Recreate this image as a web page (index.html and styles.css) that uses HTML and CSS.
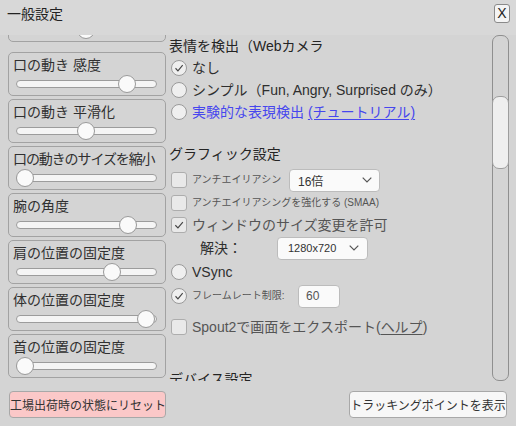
FILE: index.html
```html
<!DOCTYPE html>
<html lang="ja">
<head>
<meta charset="utf-8">
<title>一般設定</title>
<link rel="stylesheet" href="styles.css">
</head>
<body>
<div class="window">
  <header class="titlebar">
    <span class="title">一般設定</span>
    <button class="close">X</button>
  </header>

  <div class="main">
    <div class="left">
      <div class="groups">
        <div class="group group-first">
          <div class="slider"><div class="track"><span class="knob" style="left:calc((100% - 18px) * 0.5)"></span></div></div>
        </div>
        <div class="group">
          <div class="label">口の動き 感度</div>
          <div class="slider"><div class="track"><span class="knob" style="left:calc((100% - 18px) * 0.845)"></span></div></div>
        </div>
        <div class="group">
          <div class="label">口の動き 平滑化</div>
          <div class="slider"><div class="track"><span class="knob" style="left:calc((100% - 18px) * 0.5)"></span></div></div>
        </div>
        <div class="group">
          <div class="label label-tight">口の動きのサイズを縮小</div>
          <div class="slider"><div class="track"><span class="knob" style="left:0"></span></div></div>
        </div>
        <div class="group">
          <div class="label">腕の角度</div>
          <div class="slider"><div class="track"><span class="knob" style="left:calc((100% - 18px) * 0.85)"></span></div></div>
        </div>
        <div class="group">
          <div class="label">肩の位置の固定度</div>
          <div class="slider"><div class="track"><span class="knob" style="left:calc((100% - 18px) * 0.715)"></span></div></div>
        </div>
        <div class="group">
          <div class="label">体の位置の固定度</div>
          <div class="slider"><div class="track"><span class="knob" style="left:calc(100% - 18px)"></span></div></div>
        </div>
        <div class="group">
          <div class="label">首の位置の固定度</div>
          <div class="slider"><div class="track"><span class="knob" style="left:0"></span></div></div>
        </div>
      </div>
    </div>

    <div class="right">
      <div class="heading h-first">表情を検出（Webカメラ</div>
      <div class="row r-opt">
        <span class="radio"><svg viewBox="0 0 16 16"><polyline points="4,8.3 6.8,11.2 12.2,4.8"/></svg></span>
        <span class="txt">なし</span>
      </div>
      <div class="row r-opt">
        <span class="radio"></span>
        <span class="txt">シンプル（Fun, Angry, Surprised のみ）</span>
      </div>
      <div class="row r-opt">
        <span class="radio"></span>
        <span class="txt link">実験的な表現検出 <u>(チュートリアル)</u></span>
      </div>

      <div class="heading h-graphics">グラフィック設定</div>
      <div class="row r-aa">
        <span class="check"></span>
        <span class="small aa-label">アンチエイリアシン</span>
        <span class="select sel-aa"><span class="sel-text">16倍</span><svg class="chev" viewBox="0 0 10 6"><polyline points="0.7,0.7 5,5 9.3,0.7"/></svg></span>
      </div>
      <div class="row r-smaa">
        <span class="check"></span>
        <span class="small">アンチエイリアシングを強化する (SMAA)</span>
      </div>
      <div class="row r-resize">
        <span class="check"><svg viewBox="0 0 16 16"><polyline points="3.8,8.3 6.8,11.4 12.4,4.6"/></svg></span>
        <span class="txt gray">ウィンドウのサイズ変更を許可</span>
      </div>
      <div class="row r-res">
        <span class="txt res-label">解決：</span>
        <span class="select sel-res"><span class="sel-text">1280x720</span><svg class="chev" viewBox="0 0 10 6"><polyline points="0.7,0.7 5,5 9.3,0.7"/></svg></span>
      </div>
      <div class="row r-vsync">
        <span class="radio"></span>
        <span class="txt">VSync</span>
      </div>
      <div class="row r-fps">
        <span class="radio"><svg viewBox="0 0 16 16"><polyline points="4,8.3 6.8,11.2 12.2,4.8"/></svg></span>
        <span class="small fps-label">フレームレート制限:</span>
        <span class="input">60</span>
      </div>
      <div class="row r-spout">
        <span class="check"></span>
        <span class="txt gray">Spout2で画面をエクスポート(<u>ヘルプ</u>)</span>
      </div>
      <div class="heading h-device">デバイス設定</div>
    </div>

    <div class="scrollbar"><div class="thumb"></div></div>
  </div>

  <footer class="footer">
    <button class="btn btn-reset">工場出荷時の状態にリセット</button>
    <button class="btn btn-track">トラッキングポイントを表示</button>
  </footer>
</div>
</body>
</html>
```

FILE: styles.css
```css
* { box-sizing: border-box; }

html, body {
  margin: 0;
  padding: 0;
}

body {
  width: 516px;
  height: 426px;
  overflow: hidden;
  background: #d4d4d4;
  font-family: "Liberation Sans", "Noto Sans CJK JP", sans-serif;
  color: #2b2b2b;
}

.window {
  width: 516px;
  height: 426px;
  display: flex;
  flex-direction: column;
}

/* title bar */
.titlebar {
  height: 35px;
  flex: none;
  display: flex;
  justify-content: space-between;
  align-items: flex-start;
  background: #d8d8d8;
}

.title {
  font-size: 14px;
  line-height: 20px;
  margin: 4px 0 0 7px;
  color: #222;
}

.close {
  width: 16px;
  height: 19px;
  margin: 4px 6px 0 0;
  padding: 0;
  border: 1px solid #8a8a8a;
  border-radius: 3px;
  background: #f4f4f4;
  font-family: "Liberation Sans", sans-serif;
  font-size: 14px;
  line-height: 17px;
  color: #222;
}

/* main */
.main {
  height: 346px;
  flex: none;
  display: flex;
}

.left {
  width: 166px;
  flex: none;
  padding-left: 8px;
  overflow: hidden;
}

.groups {
  margin-top: -37px;
  display: flex;
  flex-direction: column;
  gap: 3px;
}

.group {
  height: 44px;
  border: 1px solid #a2a2a2;
  border-radius: 5px;
  padding: 3px 8px 2px 4px;
}

.group-first {
  margin-bottom: 7px;
  padding-top: 22px;
}

.label {
  font-size: 14px;
  line-height: 19px;
  height: 19px;
  color: #303030;
  white-space: nowrap;
}

.label-tight {
  letter-spacing: -1.1px;
}

.slider {
  height: 18px;
  margin-left: 3px;
  display: flex;
  align-items: center;
}

.track {
  position: relative;
  width: 100%;
  height: 8px;
  border: 1px solid #9c9c9c;
  border-radius: 4px;
  background: #f5f5f5;
}

.knob {
  position: absolute;
  top: -6px;
  width: 18px;
  height: 18px;
  margin-left: -1px;
  border: 1px solid #9a9a9a;
  border-radius: 50%;
  background: #fafafa;
}

/* right */
.right {
  flex: 1;
  min-width: 0;
  padding: 1px 0 0 3px;
  overflow: hidden;
}

.heading {
  font-size: 14px;
  line-height: 21px;
  height: 21px;
  color: #242424;
  white-space: nowrap;
}

.h-graphics {
  margin-top: 21px;
  line-height: 20px;
  height: 20px;
}

.h-device {
  margin-top: 31px;
  line-height: 20px;
  height: 20px;
}

.row {
  display: flex;
  align-items: center;
  white-space: nowrap;
}

.r-opt { height: 22px; }
.r-aa { height: 24px; margin-top: 4px; }
.r-smaa { height: 22px; }
.r-resize { height: 21px; }
.r-res { height: 24px; margin-top: 1px; }
.r-vsync { height: 22px; margin-top: 1px; }
.r-fps { height: 24px; margin-top: 1px; }
.r-spout { height: 22px; margin-top: 8px; }

.radio, .check {
  flex: none;
  width: 16px;
  height: 16px;
  margin-left: 2px;
  margin-right: 5px;
  border: 1px solid #9a9a9a;
  background: #efefef;
  display: flex;
  align-items: center;
  justify-content: center;
}

.radio { border-radius: 50%; }
.check { border-radius: 3px; border-color: #adadad; background: #e9e9e9; }

.radio svg, .check svg {
  width: 14px;
  height: 14px;
}

.radio polyline, .check polyline {
  fill: none;
  stroke: #454545;
  stroke-width: 1.3;
}

.txt {
  font-size: 14px;
  line-height: 18px;
  color: #2e2e2e;
}

.gray { color: #555; }

.link { color: #4646ee; }

.link u { text-underline-offset: 2px; }
.gray u { text-underline-offset: 2px; }

.small {
  font-size: 10px;
  line-height: 14px;
  color: #555;
}

.aa-label {
  width: 90px;
  margin-right: 7px;
}

.select {
  display: flex;
  align-items: center;
  justify-content: space-between;
  width: 91px;
  border: 1px solid #bcbcbc;
  border-radius: 4px;
  background: #fafafa;
}

.sel-aa {
  height: 23px;
  padding: 0 7px 0 8px;
}

.sel-res {
  height: 23px;
  padding: 0 8px 0 10px;
}

.sel-text {
  font-size: 12px;
  color: #333;
}

.sel-res .sel-text { font-size: 11px; }

.chev {
  width: 10px;
  height: 6px;
}

.chev polyline {
  fill: none;
  stroke: #555;
  stroke-width: 1.2;
}

.res-label {
  flex: none;
  width: 77px;
  margin-left: 31px;
}

.fps-label {
  width: 106px;
}

.input {
  width: 42px;
  height: 23px;
  padding-left: 7px;
  border: 1px solid #bcbcbc;
  border-radius: 4px;
  background: #fafafa;
  font-size: 12px;
  line-height: 21px;
  color: #555;
}

/* scrollbar */
.scrollbar {
  flex: none;
  width: 17px;
  margin: 0 7px 0 2px;
  border: 1px solid #8f8f8f;
  border-radius: 7px;
}

.thumb {
  height: 73px;
  margin: 60px -1px 0;
  border: 1px solid #9d9d9d;
  border-radius: 7px;
  background: #efefef;
}

/* footer */
.footer {
  flex: 1;
  display: flex;
  justify-content: space-between;
  align-items: flex-start;
  padding: 10px 9px 0 9px;
}

.btn {
  height: 27px;
  padding: 0;
  border: 1px solid #a8a8a8;
  border-radius: 4px;
  font-family: "Liberation Sans", "Noto Sans CJK JP", sans-serif;
  font-size: 12px;
  color: #333;
  white-space: nowrap;
}

.btn-reset {
  width: 157px;
  background: #fbc8c8;
}

.btn-track {
  width: 158px;
  background: #f7f7f7;
}
```
